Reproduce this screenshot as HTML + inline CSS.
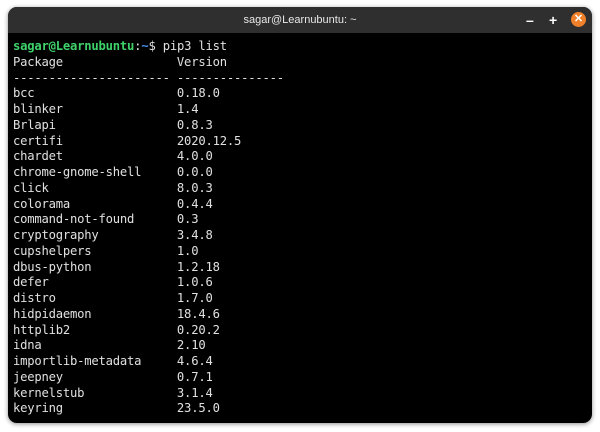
<!DOCTYPE html>
<html><head><style>
html,body{margin:0;padding:0;background:#fff;width:600px;height:432px;overflow:hidden}
.win{position:absolute;left:8px;top:7px;width:584px;height:416px;background:#000;border-radius:9px;overflow:hidden;box-shadow:0 1px 5px rgba(0,0,0,.45)}
.tb{height:26px;background:#2f2f2f;position:relative;color:#e8e8e8;font:11px "Liberation Sans",sans-serif;text-align:center;line-height:26px}
.btn{position:absolute;top:0;color:#fff;font-weight:bold;font-size:14px}
.close{position:absolute;left:563px;top:5px;width:15px;height:15px;border-radius:50%;background:#f0812a;color:#fff;font-size:11px;line-height:15px;text-align:center;font-weight:bold}
pre{margin:0;position:absolute;left:5px;top:32px;font:12.2px/15.75px "DejaVu Sans Mono",monospace;letter-spacing:-0.21px;color:#e0e0e0}
.g{color:#3fd16a;font-weight:bold}.b{color:#4a8cf0;font-weight:bold}
</style></head><body>
<div class="win">
<div class="tb">sagar@Learnubuntu: ~
<span class="btn" style="left:518px">–</span><span class="btn" style="left:541px">+</span><span class="close">✕</span></div>
<pre><span class="g">sagar@Learnubuntu</span>:<span class="b">~</span>$ pip3 list
Package                Version
---------------------- ---------------
bcc                    0.18.0
blinker                1.4
Brlapi                 0.8.3
certifi                2020.12.5
chardet                4.0.0
chrome-gnome-shell     0.0.0
click                  8.0.3
colorama               0.4.4
command-not-found      0.3
cryptography           3.4.8
cupshelpers            1.0
dbus-python            1.2.18
defer                  1.0.6
distro                 1.7.0
hidpidaemon            18.4.6
httplib2               0.20.2
idna                   2.10
importlib-metadata     4.6.4
jeepney                0.7.1
kernelstub             3.1.4
keyring                23.5.0</pre>
</div>
</body></html>
